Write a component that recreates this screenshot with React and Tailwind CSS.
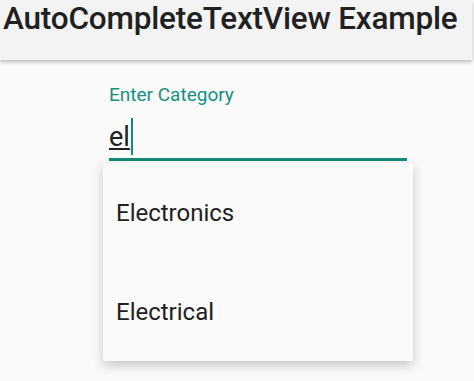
export default function App() {
  return (
    <div className="relative w-[474px] h-[381px] overflow-hidden bg-[#fafafa]" style={{ fontFamily: "Roboto, 'Noto Sans', sans-serif" }}>
      <div className="h-[60px] w-[472px] bg-[#f3f3f3] shadow-[0_2px_4px_rgba(0,0,0,0.25)] relative z-10">
        <div className="pl-[3px] pt-[0px] text-[31.5px] leading-[38px] text-[#212121] font-medium tracking-[-0.2px] whitespace-nowrap">AutoCompleteTextView Example</div>
      </div>
      <div className="pl-[109px] pr-[67px] pt-[23px]">
        <div className="text-[19px] leading-[24px] text-[#15907f]">Enter Category</div>
        <div className="flex items-end h-[41px]">
          <span className="text-[27px] leading-[32px] text-[#212121] underline underline-offset-[2px] decoration-[1.5px] mb-[-5px]">el</span>
          <span className="w-[2px] h-[37px] bg-[#158a7a] mb-[-7px] ml-[1px]"></span>
        </div>
        <div className="h-[3px] bg-[#158a7a] mt-[10px]"></div>
      </div>
      <div className="absolute left-[103px] top-[163px] w-[310px] h-[198px] bg-[#fafafa] rounded-[2px] shadow-[0_4px_12px_rgba(0,0,0,0.22)] flex flex-col z-20">
        <div className="h-[99px] flex items-center pl-[13px] text-[24px] text-[#212121]">Electronics</div>
        <div className="h-[99px] flex items-center pl-[13px] text-[24px] text-[#212121]">Electrical</div>
      </div>
    </div>
  );
}
